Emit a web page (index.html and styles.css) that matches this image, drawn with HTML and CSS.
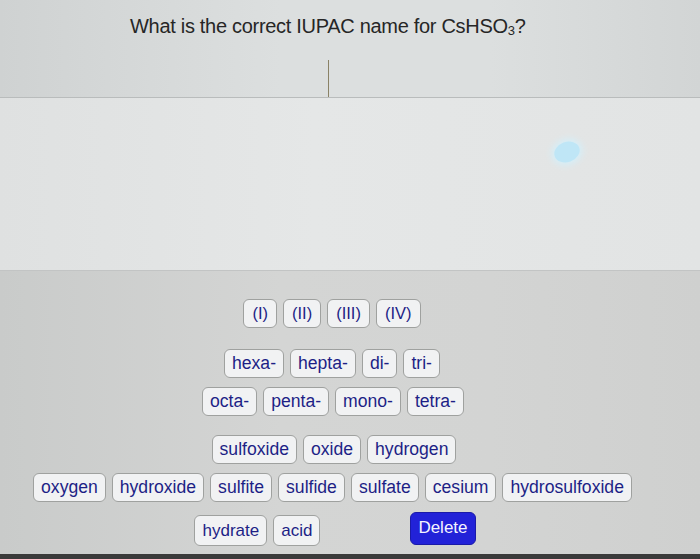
FILE: index.html
```html
<!DOCTYPE html>
<html>
<head>
<meta charset="utf-8">
<link rel="stylesheet" href="styles.css">
</head>
<body>
<div class="page">
  <div class="question">
    <p class="qtext">What is the correct IUPAC name for CsHSO<sub>3</sub>?</p>
    <div class="cursor"></div>
  </div>
  <div class="answer">
    <div class="glare"></div>
  </div>
  <div class="keypad">
    <div class="row r1">
      <span class="key">(I)</span><span class="key">(II)</span><span class="key">(III)</span><span class="key">(IV)</span>
    </div>
    <div class="row r2">
      <span class="key">hexa-</span><span class="key">hepta-</span><span class="key">di-</span><span class="key">tri-</span>
    </div>
    <div class="row r3">
      <span class="key">octa-</span><span class="key">penta-</span><span class="key">mono-</span><span class="key">tetra-</span>
    </div>
    <div class="row r4">
      <span class="key">sulfoxide</span><span class="key">oxide</span><span class="key">hydrogen</span>
    </div>
    <div class="row r5">
      <span class="key">oxygen</span><span class="key">hydroxide</span><span class="key">sulfite</span><span class="key">sulfide</span><span class="key">sulfate</span><span class="key">cesium</span><span class="key">hydrosulfoxide</span>
    </div>
    <div class="row r6">
      <span class="key">hydrate</span><span class="key">acid</span><span class="key delete">Delete</span>
    </div>
  </div>
  <div class="bottombar"></div>
</div>
</body>
</html>
```
FILE: styles.css
```css
html, body {
  margin: 0;
  padding: 0;
}
body {
  background: #d2d3d2;
  font-family: "Liberation Sans", Arial, sans-serif;
}
.page {
  width: 700px;
  height: 559px;
  display: flex;
  flex-direction: column;
  overflow: hidden;
}
.question {
  height: 97px;
  background: linear-gradient(90deg, #cfd2d2 0%, #dcdfdf 40%, #dcdfdf 70%, #d2d5d5 100%);
  border-bottom: 1px solid #b9bcbc;
  display: flex;
  flex-direction: column;
  align-items: flex-start;
}
.qtext {
  margin: 14px 0 0 130px;
  font-size: 20px;
  letter-spacing: -0.3px;
  color: #262626;
  line-height: 24px;
}
.qtext sub {
  font-size: 13px;
  vertical-align: -2px;
  line-height: 0;
}
.cursor {
  width: 1px;
  height: 37px;
  background: #8a8266;
  margin: 22px 0 0 328px;
}
.answer {
  height: 172px;
  background: linear-gradient(90deg, #dfe1e1 0%, #e5e7e7 45%, #e2e4e4 100%);
  border-bottom: 1px solid #c2c4c4;
  position: relative;
}
.glare {
  position: absolute;
  left: 554px;
  top: 44px;
  width: 26px;
  height: 20px;
  border-radius: 50%;
  background: #bfe6f6;
  box-shadow: 0 0 6px 3px #d6eef7;
  transform: rotate(-20deg);
}
.keypad {
  flex: 1;
  background: linear-gradient(90deg, #c9cbca 0%, #d4d5d4 40%, #d3d4d3 70%, #cfd0cf 100%);
  display: flex;
  flex-direction: column;
  align-items: center;
  padding-top: 28px;
}
.row {
  display: flex;
  gap: 6px;
  align-items: center;
}
.key {
  display: inline-flex;
  align-items: center;
  height: 27px;
  padding: 0 7px;
  border: 1px solid #9fa19f;
  border-radius: 6px;
  background: #f1f2f3;
  color: #1d1f86;
  font-size: 17.6px;
}
.r1 { margin-left: -36px; }
.r1 .key { padding: 0 8px; font-size: 16.5px; }
.r2 { margin-top: 21px; margin-left: -36px; }
.r3 { margin-top: 9px; margin-left: -34px; }
.r4 { margin-top: 19px; margin-left: -32px; }
.r5 { margin-top: 9px; margin-left: -35px; }
.r6 { margin-top: 13px; margin-left: -30px; }
.r6 .key { height: 29px; font-size: 17px; }
.key.delete {
  margin-left: 84px;
  margin-top: -5px;
  background: #2222d8;
  border-color: #1a1aa8;
  color: #f4f4ff;
  height: 31px;
}
.bottombar {
  height: 5px;
  background: #3a3a3a;
}
```
